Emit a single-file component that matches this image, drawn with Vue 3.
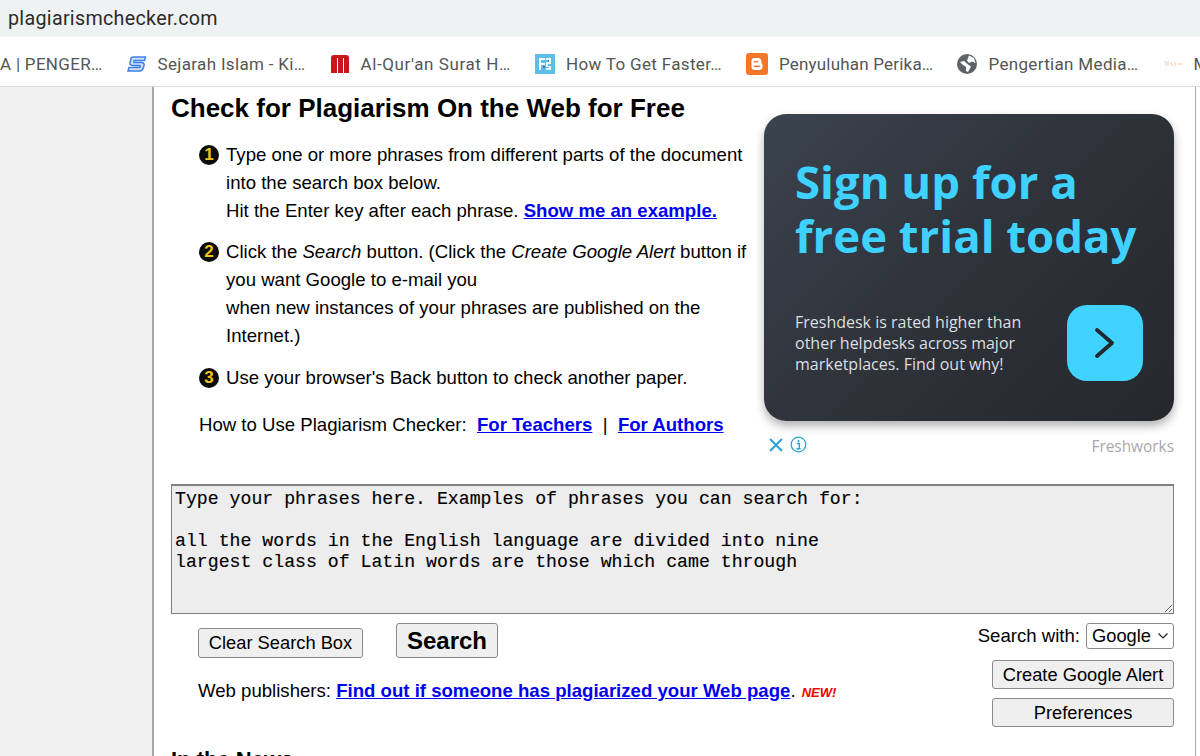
<script setup>
const phrases = `Type your phrases here. Examples of phrases you can search for:

all the words in the English language are divided into nine
largest class of Latin words are those which came through`
</script>

<template>
  <div class="window">
    <header class="address">plagiarismchecker.com</header>

    <nav class="bookmarks">
      <div class="mark"><span class="mark-text mark-first">A | PENGER…</span></div>
      <div class="mark">
        <svg class="fav" viewBox="0 0 20 20">
          <path d="M6.500 3h12l-1 3.500H7.500c-1 0-1.300 2 0 2h7c2.400 0 3 1.700 2.400 3.500l-.8 2.500c-.5 1.500-1.700 2.500-3.300 2.500H1l1-3.500h10.500c1 0 1.300-2 0-2h-7c-2.400 0-3-1.700-2.400-3.500l.8-2.500C3.400 4 4.900 3 6.500 3z" fill="#cfe0fb" stroke="#3f7fe6" stroke-width="1.500"/>
        </svg>
        <span class="mark-text">Sejarah Islam - Ki…</span>
      </div>
      <div class="mark">
        <svg class="fav" viewBox="0 0 20 20">
          <path d="M1 19V4a3 3 0 0 1 3-3h12a3 3 0 0 1 3 3v15h-5V4h-1v15H8V4H7v15z" fill="#c9161d"/>
        </svg>
        <span class="mark-text mark-wide">Al-Qur'an Surat H…</span>
      </div>
      <div class="mark">
        <svg class="fav" viewBox="0 0 20 20">
          <rect width="20" height="20" fill="#5dbfe9"/>
          <path d="M4 4h6v2H6v3h4v2H6v5H4zM11 4h5v6h-3v2h3v4h-5v-2h3v-1h-3V8h3V6h-3z" fill="#f2fafd"/>
          <path d="M8 12h2v2H8zM13 6h1v2h-1z" fill="#3b7d9f"/>
        </svg>
        <span class="mark-text">How To Get Faster…</span>
      </div>
      <div class="mark">
        <svg class="fav fav-lg" viewBox="0 0 22 22">
          <rect width="22" height="22" rx="3" fill="#f4762a"/>
          <path d="M8.500 5H12a3.500 3.500 0 0 1 3.500 3.500V10a1 1 0 0 0 1 1v2.500A3.500 3.500 0 0 1 13 17H9a3.500 3.500 0 0 1-3.500-3.500V8A3 3 0 0 1 8.500 5z" fill="#fff"/>
          <path d="M8.500 8.800h3M8.500 13.200h5" stroke="#f4762a" stroke-width="1.600" stroke-linecap="round"/>
        </svg>
        <span class="mark-text mark-narrow">Penyuluhan Perika…</span>
      </div>
      <div class="mark">
        <svg class="fav" viewBox="0 0 20 20">
          <circle cx="10" cy="10" r="10" fill="#5f6368"/>
          <path d="M12 1.500l5 2.500 1.500 5-3.500-1.500-3 1.500-2-2.500zM3 8l4-1 4 3.500 3 2-3 5.500-2-1v-4L6 11z" fill="#fff"/>
        </svg>
        <span class="mark-text">Pengertian Media…</span>
      </div>
      <div class="mark">
        <svg class="fav" viewBox="0 0 20 20">
          <path d="M1 8c2-2 3 3 1 4M5 7v5M7 10c2-2 3 2 1 2M11 8c2 0 2 4 0 4M14 10h5" fill="none" stroke="#eebb98" stroke-width="0.800"/>
        </svg>
        <span class="mark-text">M</span>
      </div>
    </nav>

    <div class="page">
      <aside class="side"></aside>

      <main class="main">
        <section class="top">
          <div class="intro">
            <h1 class="title">Check for Plagiarism On the Web for Free</h1>

            <div class="step step-one">
              <span class="num">1</span>
              <p>
                Type one or more phrases from different parts of the document<br>
                into the search box below.<br>
                Hit the Enter key after each phrase. <a href="#" class="link">Show me an example.</a>
              </p>
            </div>
            <div class="step">
              <span class="num">2</span>
              <p>
                Click the <i>Search</i> button. (Click the <i>Create Google Alert</i> button if<br>
                you want Google to e-mail you<br>
                when new instances of your phrases are published on the<br>
                Internet.)
              </p>
            </div>
            <div class="step step-last">
              <span class="num">3</span>
              <p>Use your browser's Back button to check another paper.</p>
            </div>

            <p class="howto">
              How to Use Plagiarism Checker:&nbsp; <a href="#" class="link">For Teachers</a>&nbsp; |&nbsp; <a href="#" class="link">For Authors</a>
            </p>
          </div>

          <div class="ad-wrap">
            <div class="ad">
              <h2 class="ad-title">Sign up for a<br>free trial today</h2>
              <div class="ad-foot">
                <p class="ad-copy">Freshdesk is rated higher than<br>other helpdesks across major<br>marketplaces. Find out why!</p>
                <div class="ad-go">
                  <svg width="24" height="32" viewBox="0 0 24 32">
                    <path d="M4 3l15 13L4 29" fill="none" stroke="#23272e" stroke-width="3.800" stroke-linecap="round" stroke-linejoin="round"/>
                  </svg>
                </div>
              </div>
            </div>
            <div class="ad-meta">
              <div class="ad-icons">
                <svg width="16" height="16" viewBox="0 0 16 16">
                  <path d="M2 2l12 12M14 2L2 14" stroke="#2aa3d0" stroke-width="2"/>
                </svg>
                <svg width="17" height="17" viewBox="0 0 17 17">
                  <circle cx="8.500" cy="8.500" r="7.300" fill="none" stroke="#2aa3d0" stroke-width="1.300"/>
                  <circle cx="8.500" cy="5" r="1.100" fill="#2aa3d0"/>
                  <path d="M6.800 7.500h2.500v5M6.500 12.700h4.200" fill="none" stroke="#2aa3d0" stroke-width="1.400"/>
                </svg>
              </div>
              <span class="ad-brand">Freshworks</span>
            </div>
          </div>
        </section>

        <textarea class="box" :value="phrases" spellcheck="false"></textarea>

        <section class="controls">
          <div class="controls-left">
            <div class="actions">
              <button class="btn btn-clear">Clear Search Box</button>
              <button class="btn btn-search">Search</button>
            </div>
            <p class="publishers">
              Web publishers: <a href="#" class="link">Find out if someone has plagiarized your Web page</a>. <span class="new">NEW!</span>
            </p>
          </div>

          <div class="controls-right">
            <div class="engine">
              <span>Search with:</span>
              <div class="select">
                <span>Google</span>
                <svg width="12" height="8" viewBox="0 0 12 8">
                  <path d="M1.500 1.500L6 6l4.500-4.500" fill="none" stroke="#222" stroke-width="1.200"/>
                </svg>
              </div>
            </div>
            <button class="btn btn-wide">Create Google Alert</button>
            <button class="btn btn-wide">Preferences</button>
          </div>
        </section>

        <h2 class="news">In the News</h2>
      </main>

      <div class="gutter"></div>
    </div>
  </div>
</template>

<style>
html,
body {
  margin: 0;
  overflow: hidden;
}
</style>

<style scoped>
.window {
  width: 1200px;
  height: 756px;
  overflow: hidden;
  display: flex;
  flex-direction: column;
  background: #fff;
  color: #000;
  font-family: "Liberation Sans", Arial, sans-serif;
  font-size: 18.600px;
}

.address {
  height: 37px;
  flex: none;
  padding-left: 8px;
  box-sizing: border-box;
  display: flex;
  align-items: center;
  background: #eff2f3;
  color: #2b2b2b;
  font-family: Roboto, sans-serif;
  font-size: 19.700px;
  letter-spacing: 0.300px;
}

.bookmarks {
  height: 50px;
  flex: none;
  padding-top: 5px;
  box-sizing: border-box;
  display: flex;
  align-items: center;
  gap: 24px;
  border-bottom: 1px solid #dcdcdc;
  white-space: nowrap;
}

.mark {
  flex: none;
  display: flex;
  align-items: center;
  gap: 11px;
}

.mark-text {
  color: #555;
  font-family: Roboto, sans-serif;
  font-size: 17px;
  letter-spacing: 0.330px;
}

.mark-first {
  letter-spacing: 0.300px;
}

.mark-wide {
  letter-spacing: 0.600px;
}

.mark-narrow {
  letter-spacing: 0.200px;
}

.fav {
  width: 20px;
  height: 20px;
  flex: none;
}

.fav-lg {
  width: 22px;
  height: 22px;
}

.page {
  flex: 1;
  min-height: 0;
  display: flex;
}

.side {
  width: 152px;
  flex: none;
  background: #f0f0f0;
}

.main {
  flex: 1;
  min-width: 0;
  padding: 0 21px 0 17px;
  border-left: 2px solid #a8a8a8;
  border-right: 1px solid #a8a8a8;
}

.gutter {
  width: 4px;
  flex: none;
}

.top {
  display: flex;
  justify-content: space-between;
}

.title {
  margin: 7px 0 18px;
  font-size: 26px;
  line-height: 29px;
  font-weight: 700;
  white-space: nowrap;
}

.step {
  display: flex;
  margin: 13px 0 0 28px;
}

.step-one {
  margin-top: 0;
}

.step-last {
  margin-top: 14px;
}

.step p {
  margin: 0;
  line-height: 28px;
  white-space: nowrap;
}

.num {
  width: 20px;
  height: 20px;
  margin: 4px 7px 0 0;
  flex: none;
  display: flex;
  align-items: center;
  justify-content: center;
  border-radius: 50%;
  background: #0c0c0c;
  color: #f2c417;
  font-size: 17px;
  font-weight: 700;
}

.howto {
  margin: 19px 0 0 28px;
  line-height: 28px;
  white-space: nowrap;
}

.link {
  color: #0000ee;
  font-weight: 700;
  text-decoration: underline;
}

.ad-wrap {
  width: 410px;
  flex: none;
  padding-top: 27px;
}

.ad {
  height: 307px;
  box-sizing: border-box;
  padding: 40px 31px 40px;
  display: flex;
  flex-direction: column;
  justify-content: space-between;
  border-radius: 22px;
  background: linear-gradient(135deg, #3b434e 0%, #2d3138 55%, #25272c 100%);
  box-shadow: 0 5px 10px rgba(0, 0, 0, 0.3);
  font-family: "Open Sans", sans-serif;
}

.ad-title {
  margin: 0;
  color: #3fd1ff;
  font-size: 45.500px;
  line-height: 54px;
  font-weight: 700;
  white-space: nowrap;
}

.ad-foot {
  display: flex;
  align-items: center;
  justify-content: space-between;
}

.ad-copy {
  margin: 0;
  color: #dcdfe2;
  font-size: 16px;
  line-height: 21px;
  white-space: nowrap;
}

.ad-go {
  width: 76px;
  height: 76px;
  flex: none;
  display: flex;
  align-items: center;
  justify-content: center;
  border-radius: 20px;
  background: #41d3ff;
}

.ad-meta {
  margin-top: 15px;
  padding-left: 4px;
  display: flex;
  align-items: flex-start;
  justify-content: space-between;
}

.ad-icons {
  display: flex;
  align-items: center;
  gap: 6px;
}

.ad-brand {
  color: #a9a9a9;
  font-family: "Open Sans", sans-serif;
  font-size: 15.400px;
  line-height: 22px;
}

.box {
  display: block;
  width: 100%;
  height: 130px;
  margin: 26px 0 0;
  padding: 3px 3px;
  box-sizing: border-box;
  border: 1px solid #808080;
  border-top-width: 2px;
  border-radius: 0;
  outline: none;
  background: #ededed;
  color: #000;
  font-family: "Liberation Mono", monospace;
  font-size: 18.200px;
  line-height: 21px;
  -webkit-text-stroke: 0.150px #000;
}

.controls {
  display: flex;
  justify-content: space-between;
  margin-top: 8px;
}

.controls-left {
  padding-left: 27px;
}

.actions {
  display: flex;
  align-items: flex-end;
  gap: 33px;
  height: 36px;
}

.btn {
  height: 29px;
  padding: 0;
  box-sizing: border-box;
  border: 1px solid #8a8a8a;
  border-radius: 3px;
  background: #efefef;
  color: #000;
  font-family: "Liberation Sans", Arial, sans-serif;
  font-size: 18.300px;
  white-space: nowrap;
  cursor: pointer;
}

.btn-clear {
  width: 165px;
  height: 30px;
}

.btn-search {
  width: 102px;
  height: 35px;
  font-size: 24px;
  font-weight: 700;
}

.publishers {
  margin: 19px 0 0;
  line-height: 28px;
  white-space: nowrap;
}

.new {
  margin-left: 1px;
  color: #f00000;
  font-size: 13px;
  font-style: italic;
  font-weight: 700;
}

.controls-right {
  width: 196px;
  display: flex;
  flex-direction: column;
  align-items: flex-end;
  gap: 9px;
}

.engine {
  display: flex;
  align-items: center;
  gap: 6px;
  height: 26px;
  margin: 1px 0 2px;
  white-space: nowrap;
}

.select {
  width: 88px;
  height: 26px;
  padding: 0 4px 0 5px;
  box-sizing: border-box;
  display: flex;
  align-items: center;
  justify-content: space-between;
  border: 1px solid #8a8a8a;
  border-radius: 3px;
  background: #fff;
  font-size: 18.300px;
}

.btn-wide {
  width: 182px;
}

.news {
  margin: 21px 0 0;
  font-size: 22px;
  line-height: 24px;
  font-weight: 700;
}
</style>
